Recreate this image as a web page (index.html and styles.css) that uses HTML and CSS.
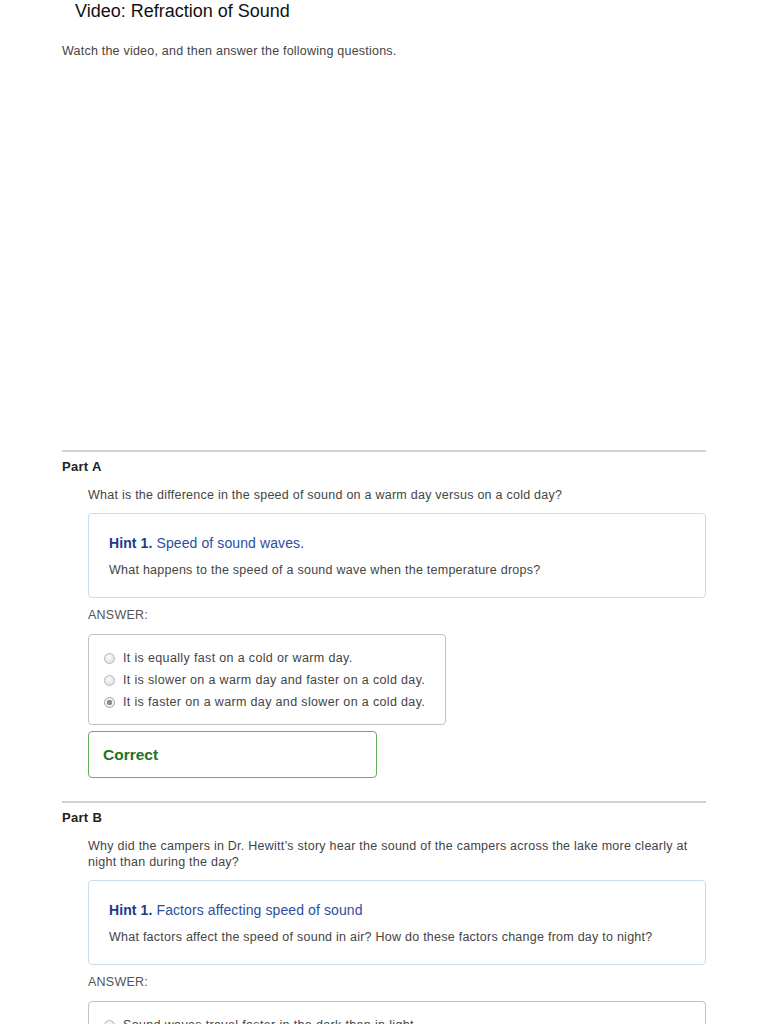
FILE: index.html
```html
<!DOCTYPE html>
<html>
<head>
<meta charset="utf-8">
<link rel="stylesheet" href="styles.css">
</head>
<body>
<div class="page">
  <h1 class="title">Video: Refraction of Sound</h1>
  <p class="intro">Watch the video, and then answer the following questions.</p>
  <div class="video"></div>

  <section class="part">
    <h2 class="part-title">Part A</h2>
    <div class="part-body">
      <p class="question">What is the difference in the speed of sound on a warm day versus on a cold day?</p>
      <div class="hint">
        <p class="hint-title"><b>Hint 1.</b> Speed of sound waves.</p>
        <p class="hint-text">What happens to the speed of a sound wave when the temperature drops?</p>
      </div>
      <p class="answer-label">ANSWER:</p>
      <div class="answer">
        <div class="opt"><span class="radio"></span>It is equally fast on a cold or warm day.</div>
        <div class="opt"><span class="radio"></span>It is slower on a warm day and faster on a cold day.</div>
        <div class="opt"><span class="radio checked"></span>It is faster on a warm day and slower on a cold day.</div>
      </div>
      <div class="correct">Correct</div>
    </div>
  </section>

  <section class="part">
    <h2 class="part-title">Part B</h2>
    <div class="part-body">
      <p class="question">Why did the campers in Dr. Hewitt’s story hear the sound of the campers across the lake more clearly at night than during the day?</p>
      <div class="hint">
        <p class="hint-title"><b>Hint 1.</b> Factors affecting speed of sound</p>
        <p class="hint-text">What factors affect the speed of sound in air? How do these factors change from day to night?</p>
      </div>
      <p class="answer-label">ANSWER:</p>
      <div class="answer wide">
        <div class="opt"><span class="radio"></span>Sound waves travel faster in the dark than in light.</div>
        <div class="opt"><span class="radio"></span>Sound waves bend toward the ground at night.</div>
      </div>
    </div>
  </section>
</div>
</body>
</html>
```

FILE: styles.css
```css
html, body {
  margin: 0;
  padding: 0;
  background: #fff;
}
body {
  font-family: "Liberation Sans", Arial, sans-serif;
  color: #3a3a3a;
}
.page {
  padding: 0 62px 0 62px;
}
p { margin: 0; }
.title {
  margin: 0;
  padding: 0 0 0 13px;
  font-size: 18px;
  font-weight: normal;
  color: #111;
  line-height: 22px;
  letter-spacing: 0;
}
.intro {
  margin-top: 21px;
  font-size: 12.5px;
  line-height: 16px;
  letter-spacing: 0.22px;
  color: #444;
}
.video {
  height: 391px;
}
.part {
  border-top: 2px solid #d2d2d2;
  padding-top: 7px;
}
.part + .part {
  margin-top: 23px;
}
.part-title {
  margin: 0;
  font-size: 13px;
  font-weight: bold;
  line-height: 16px;
  color: #222;
  letter-spacing: 0.3px;
}
.part-body {
  padding-left: 26px;
  font-size: 12.5px;
  letter-spacing: 0.25px;
}
.question {
  margin-top: 12px;
  line-height: 16px;
  color: #444;
}
.hint {
  margin-top: 10px;
  border: 1px solid #c9dcee;
  border-radius: 4px;
  padding: 20px 20px 19px 20px;
}
.hint-title {
  font-size: 14px;
  line-height: 18px;
  color: #2d4da0;
  letter-spacing: 0.1px;
}
.hint-title b {
  color: #1d3a8c;
}
.hint-text {
  margin-top: 10px;
  line-height: 16px;
  color: #444;
}
.answer-label {
  margin-top: 9px;
  line-height: 16px;
  color: #555;
}
.answer {
  margin-top: 11px;
  width: 358px;
  border: 1px solid #c2c2c2;
  border-radius: 4px;
  padding: 12px 0 11px 15px;
  box-sizing: border-box;
}
.answer.wide {
  width: auto;
}
.opt {
  display: flex;
  align-items: center;
  height: 22px;
  color: #444;
  letter-spacing: 0.35px;
}
.radio {
  width: 11px;
  height: 11px;
  border-radius: 50%;
  border: 1px solid #b5b5b5;
  background: radial-gradient(circle at 40% 35%, #fafafa, #dcdcdc);
  box-sizing: border-box;
  margin-right: 8px;
  flex: none;
}
.radio.checked {
  background: radial-gradient(circle, #8c8c8c 0 2.5px, #f2f2f2 3px);
  border-color: #a0a0a0;
}
.correct {
  margin-top: 6px;
  width: 289px;
  height: 47px;
  box-sizing: border-box;
  border: 1px solid #5fb05a;
  border-radius: 4px;
  padding-left: 14px;
  display: flex;
  align-items: center;
  font-size: 15.5px;
  font-weight: bold;
  color: #26701f;
  letter-spacing: 0;
}
```
